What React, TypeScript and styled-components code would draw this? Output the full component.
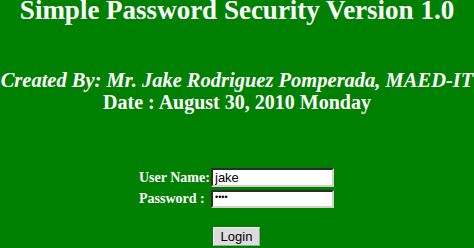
import * as React from 'react';
import styled, { createGlobalStyle } from 'styled-components';

const GlobalStyle = createGlobalStyle`
  html, body {
    margin: 0;
    padding: 0;
    background: #008000;
    overflow: hidden;
  }
  body {
    font-family: "Liberation Serif", "Times New Roman", serif;
    color: #ffffff;
  }
`;

const Page = styled.div`
  width: 474px;
  height: 248px;
  display: flex;
  flex-direction: column;
  align-items: center;
`;

const Title = styled.h1`
  margin: -3px 0 0;
  font-size: 27px;
  line-height: 27px;
  font-weight: bold;
  white-space: nowrap;
`;

const Credit = styled.h2`
  margin: 45px 0 0;
  font-size: 20.5px;
  line-height: 22px;
  font-weight: bold;
  font-style: italic;
  white-space: nowrap;
`;

const DateLine = styled.h2`
  margin: 0;
  font-size: 20px;
  line-height: 22px;
  font-weight: bold;
  white-space: nowrap;
`;

const Form = styled.form`
  margin-top: 55px;
  display: grid;
  grid-template-columns: 72px 124px;
  row-gap: 3px;
  align-items: center;
`;

const Label = styled.label`
  font-size: 14px;
  font-weight: bold;
  white-space: nowrap;
`;

const Input = styled.input<{ $h: number; $small?: boolean }>`
  box-sizing: border-box;
  width: 123px;
  height: ${(p) => p.$h}px;
  margin: 0;
  padding: ${(p) => (p.$small ? '0 2px 4px' : '1px 2px')};
  border: 2px inset #d4d0c8;
  border-top-color: #808080;
  border-left-color: #808080;
  background: #ffffff;
  font-family: "Liberation Sans", Arial, sans-serif;
  font-size: ${(p) => (p.$small ? '9px' : '13px')};
  color: #000000;
  outline: none;
`;

const ButtonRow = styled.div`
  grid-column: 2;
  margin-top: 16px;
`;

const Button = styled.button`
  box-sizing: border-box;
  width: 47px;
  height: 19px;
  margin-left: 2px;
  padding: 0;
  background: #dcdcdc;
  border: 1px solid #f4f4f4;
  border-right-color: #a0a0a0;
  border-bottom-color: #a0a0a0;
  font-family: "Liberation Sans", Arial, sans-serif;
  font-size: 13px;
  color: #000000;
`;

export default function App() {
  return (
    <Page>
      <GlobalStyle />
      <Title>Simple Password Security Version 1.0</Title>
      <Credit>Created By: Mr. Jake Rodriguez Pomperada, MAED-IT</Credit>
      <DateLine>Date : August 30, 2010 Monday</DateLine>
      <Form onSubmit={(e) => e.preventDefault()}>
        <Label htmlFor="user">User Name:</Label>
        <Input id="user" $h={19} defaultValue="jake" />
        <Label htmlFor="pass">Password :</Label>
        <Input id="pass" $h={18} $small type="password" defaultValue="jake" />
        <ButtonRow>
          <Button type="submit">Login</Button>
        </ButtonRow>
      </Form>
    </Page>
  );
}
